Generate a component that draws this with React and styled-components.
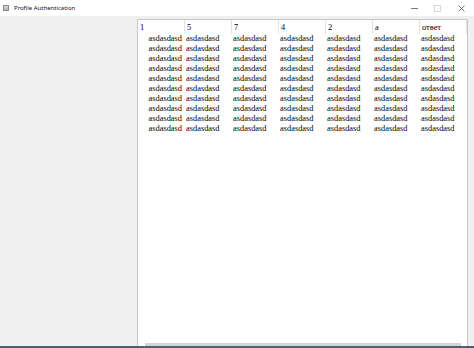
import styled, { createGlobalStyle } from 'styled-components'

const Global = createGlobalStyle`
  html, body { margin: 0; padding: 0; background: #f0f0f0; }
  #root { width: 474px; height: 348px; overflow: hidden; }
`

const Window = styled.div`
  width: 474px;
  height: 348px;
  display: flex;
  flex-direction: column;
  background: #f0f0f0;
`

const TitleBar = styled.div`
  height: 16px;
  background: #fff;
  display: flex;
  align-items: center;
  padding-left: 3px;
  font-family: "Noto Sans", "Liberation Sans", sans-serif;
  font-size: 6px;
  color: #111;
`

const AppIcon = styled.div`
  width: 6px;
  height: 6px;
  border: 1px solid #8a8a8a;
  background: linear-gradient(#d8d8d8, #b0b0b0);
  box-sizing: border-box;
  margin-right: 5px;
`

const Title = styled.span`
  flex: 1;
`

const Controls = styled.div`
  display: flex;
  height: 16px;
  padding-right: 1px;
`

const Control = styled.div`
  width: 23.5px;
  display: flex;
  align-items: center;
  justify-content: center;
`

const Body = styled.div`
  flex: 1;
  display: flex;
  padding: 3px 7px 0 137px;
`

const TableBox = styled.div`
  flex: 1;
  background: #fff;
  border: 1px solid #c8c8c8;
  border-bottom: none;
  display: flex;
  flex-direction: column;
`

const Grid = styled.div`
  flex: 1;
  font-family: "Liberation Serif", serif;
  font-size: 8.4px;
  color: #000;
`

const Row = styled.div`
  display: grid;
  grid-template-columns: repeat(7, 47px);
  height: ${({ header }) => (header ? 14 : 10)}px;
  line-height: ${({ header }) => (header ? 15 : 10)}px;
`

const Cell = styled.div`
  padding: 0 ${({ right }) => (right ? '3px' : '1px')} 0 ${({ header }) => (header ? '2px' : '1px')};
  text-align: ${({ right }) => (right ? 'right' : 'left')};
  border-right: ${({ header }) => (header ? '1px solid #e3e3e3' : 'none')};
  white-space: nowrap;
  overflow: hidden;
`

const ScrollBar = styled.div`
  height: 3px;
  margin: 0 6px 0 7px;
  background: #d4d4d4;
`

const Bottom = styled.div`
  height: 2px;
  background: #4b6272;
`

const heads = ['1', '5', '7', '4', '2', 'a', 'ответ']

export default function App() {
  return (
    <Window>
      <Global />
      <TitleBar>
        <AppIcon />
        <Title>Profile Authentication</Title>
        <Controls>
          <Control>
            <svg width="7" height="7"><line x1="0" y1="3.5" x2="7" y2="3.5" stroke="#444" strokeWidth="0.7" /></svg>
          </Control>
          <Control>
            <svg width="7" height="7"><rect x="0.5" y="0.5" width="6" height="6" fill="none" stroke="#c4c4c4" strokeWidth="0.7" /></svg>
          </Control>
          <Control>
            <svg width="7" height="7"><path d="M0.5 0.5 L6.5 6.5 M6.5 0.5 L0.5 6.5" stroke="#444" strokeWidth="0.7" /></svg>
          </Control>
        </Controls>
      </TitleBar>
      <Body>
        <TableBox>
          <Grid>
            <Row header>
              {heads.map((h, i) => (
                <Cell header key={i}>{h}</Cell>
              ))}
            </Row>
            {Array.from({ length: 10 }).map((_, r) => (
              <Row key={r}>
                {heads.map((h, i) => (
                  <Cell key={i} right={i === 0}>asdasdasd</Cell>
                ))}
              </Row>
            ))}
          </Grid>
          <ScrollBar />
        </TableBox>
      </Body>
      <Bottom />
    </Window>
  )
}
